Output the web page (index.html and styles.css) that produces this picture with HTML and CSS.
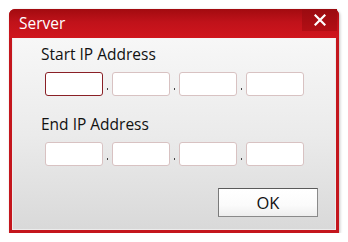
FILE: index.html
```html
<!DOCTYPE html>
<html>
<head>
<meta charset="utf-8">
<link rel="stylesheet" href="styles.css">
</head>
<body>
<div class="dialog">
  <div class="titlebar">
    <span class="title">Server</span>
    <span class="close"><svg width="12" height="12" viewBox="0 0 12 12"><path d="M1.5 1.5 L10.5 10.5 M10.5 1.5 L1.5 10.5" stroke="#fff" stroke-width="2.2" stroke-linecap="square"/></svg></span>
  </div>
  <div class="content">
    <div class="label">Start IP Address</div>
    <div class="iprow">
      <span class="field focused"></span><span class="dot"></span>
      <span class="field"></span><span class="dot"></span>
      <span class="field"></span><span class="dot"></span>
      <span class="field"></span>
    </div>
    <div class="label second">End IP Address</div>
    <div class="iprow">
      <span class="field"></span><span class="dot"></span>
      <span class="field"></span><span class="dot"></span>
      <span class="field"></span><span class="dot"></span>
      <span class="field"></span>
    </div>
    <div class="actions">
      <button class="ok">OK</button>
    </div>
  </div>
</div>
</body>
</html>
```

FILE: styles.css
```css
html, body {
  margin: 0;
  padding: 0;
  background: #ffffff;
}
body {
  font-family: "Open Sans", "DejaVu Sans", sans-serif;
}
.dialog {
  margin: 9px 0 0 9px;
  width: 330px;
  height: 224px;
  box-sizing: border-box;
  background: #c4161d;
  border-radius: 6px 6px 0 0;
  padding: 0 3px 3px 3px;
  display: flex;
  flex-direction: column;
  box-shadow: 1px 1px 3px rgba(0, 0, 0, 0.25);
}
.titlebar {
  height: 29px;
  margin: 0 -3px;
  border-radius: 6px 6px 0 0;
  background: linear-gradient(to bottom, #a20b10 0%, #c0121a 45%, #d0161d 100%);
  display: flex;
  align-items: flex-start;
  justify-content: space-between;
}
.title {
  color: #ffffff;
  font-size: 15.5px;
  line-height: 29px;
  padding-left: 10px;
}
.close {
  width: 35px;
  height: 22px;
  margin-right: 2px;
  background: linear-gradient(to bottom, #9a0b10, #b30f15);
  display: flex;
  align-items: center;
  justify-content: center;
}
.close svg {
  display: block;
}
.content {
  flex: 1;
  border: 1px solid #ececec;
  border-top-color: #f6f6f6;
  background: linear-gradient(to bottom, #f7f7f7 0%, #ebebeb 50%, #d9d9d9 100%);
  padding: 5px 0 0 28px;
  display: flex;
  flex-direction: column;
}
.label {
  font-size: 15.5px;
  line-height: 20px;
  color: #111111;
}
.label.second {
  margin-top: 18px;
}
.iprow {
  display: flex;
  margin-top: 8px;
  margin-left: 4px;
  height: 24px;
}
.field {
  width: 58px;
  height: 24px;
  box-sizing: border-box;
  border: 1px solid #d8c2c2;
  border-radius: 3px;
  background: #ffffff;
}
.field.focused {
  border-color: #8a2026;
}
.dot {
  width: 9px;
  position: relative;
}
.dot::after {
  content: "";
  position: absolute;
  left: 4px;
  top: 16px;
  width: 1px;
  height: 2px;
  background: #444444;
}
.actions {
  display: flex;
  justify-content: flex-end;
  margin-top: 22px;
  padding-right: 17px;
}
.ok {
  width: 100px;
  height: 29px;
  box-sizing: border-box;
  border: 1px solid #8a8a8a;
  border-top-color: #5a5a5a;
  border-left-color: #7a7a7a;
  background: linear-gradient(to bottom, #ffffff 0%, #fbfbfb 60%, #eeeeee 100%);
  font-family: "Open Sans", "DejaVu Sans", sans-serif;
  font-size: 16.5px;
  color: #111111;
  padding: 0;
}
```
